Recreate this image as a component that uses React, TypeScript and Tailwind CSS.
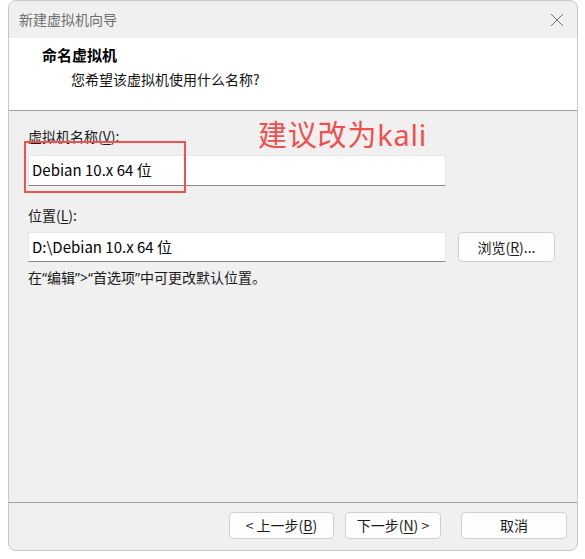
const font = { fontFamily: '"Noto Sans CJK SC", "Noto Sans", sans-serif' }
const latinFirst = { fontFamily: '"Noto Sans", "Noto Sans CJK SC", sans-serif' }

const Underline = ({ ch }: { ch: string }) => <span className="underline underline-offset-2">{ch}</span>

const WinButton = ({ children, className }: { children: React.ReactNode; className?: string }) => (
    <button
        className={
            "h-[27px] flex items-center justify-center rounded-[4px] border border-[#d0d0d0] bg-[#fdfdfd] text-[14px] text-[#1a1a1a] " +
            (className ?? "")
        }
    >
        {children}
    </button>
)

export default function App() {
    return (
        <div className="w-[585px] h-[559px] bg-white" style={font}>
            <div className="ml-[8px] w-[570px] h-[551px] flex flex-col rounded-[8px] border border-[#c8c8c8] bg-[#f0f0f0] overflow-hidden">
                {/* Title bar */}
                <div className="h-[37px] shrink-0 flex items-center justify-between pl-[10px] pr-[13px]">
                    <span className="text-[14px] text-[#6e6e6e]">新建虚拟机向导</span>
                    <svg width="14" height="14" viewBox="0 0 14 14" className="mt-[1px]">
                        <path d="M1 1 L13 13 M13 1 L1 13" stroke="#707070" strokeWidth="1" fill="none" />
                    </svg>
                </div>

                {/* Header */}
                <div className="h-[73px] shrink-0 bg-white border-b border-[#a0a0a0] pt-[7px]">
                    <div className="pl-[33px] text-[15px] font-bold leading-[20px] text-black">命名虚拟机</div>
                    <div className="pl-[62px] mt-[4px] text-[14px] leading-[20px] text-[#111]">
                        您希望该虚拟机使用什么名称?
                    </div>
                </div>

                {/* Body */}
                <div className="relative flex-1 pl-[19px] pr-[21px] pt-[15px] text-[14px] text-[#1a1a1a]">
                    <div className="leading-[20px]">
                        虚拟机名称(<Underline ch="V" />):
                    </div>
                    <div className="mt-[9px] w-[418px] h-[31px] bg-white border border-[#e6e6e6] border-b-[#8a8a8a] flex items-center pl-[3px] text-[15px] text-black">
                        Debian 10.x 64 位
                    </div>

                    <div className="mt-[19px] leading-[20px]">
                        位置(<Underline ch="L" />):
                    </div>
                    <div className="mt-[7px] flex items-center gap-[12px]">
                        <div className="w-[418px] h-[30px] bg-white border border-[#e6e6e6] border-b-[#8a8a8a] flex items-center pl-[3px] text-[15px] text-black">
                            D:\Debian 10.x 64 位
                        </div>
                        <WinButton className="w-[97px] h-[30px]">
                            浏览(<Underline ch="R" />)...
                        </WinButton>
                    </div>
                    <div className="mt-[6px] leading-[20px]" style={latinFirst}>
                        在“编辑”&gt;“首选项”中可更改默认位置。
                    </div>

                    {/* annotation */}
                    <div className="absolute left-[15px] top-[30px] w-[162px] h-[52px] border-2 border-[#f05252]" />
                    <div
                        className="absolute left-[249px] top-[4px] text-[29px] leading-[40px] tracking-[0.8px] text-[#f24e4e]"
                        style={latinFirst}
                    >
                        建议改为kali
                    </div>
                </div>

                {/* Footer */}
                <div className="h-[48px] shrink-0 border-t border-[#a0a0a0] flex items-center justify-end pr-[10px] pb-[3px]">
                    <WinButton className="w-[105px]">
                        &lt;&nbsp;上一步(<Underline ch="B" />)
                    </WinButton>
                    <WinButton className="w-[96px] ml-[11px]">
                        下一步(<Underline ch="N" />)&nbsp;&gt;
                    </WinButton>
                    <WinButton className="w-[106px] ml-[20px]">取消</WinButton>
                </div>
            </div>
        </div>
    )
}
